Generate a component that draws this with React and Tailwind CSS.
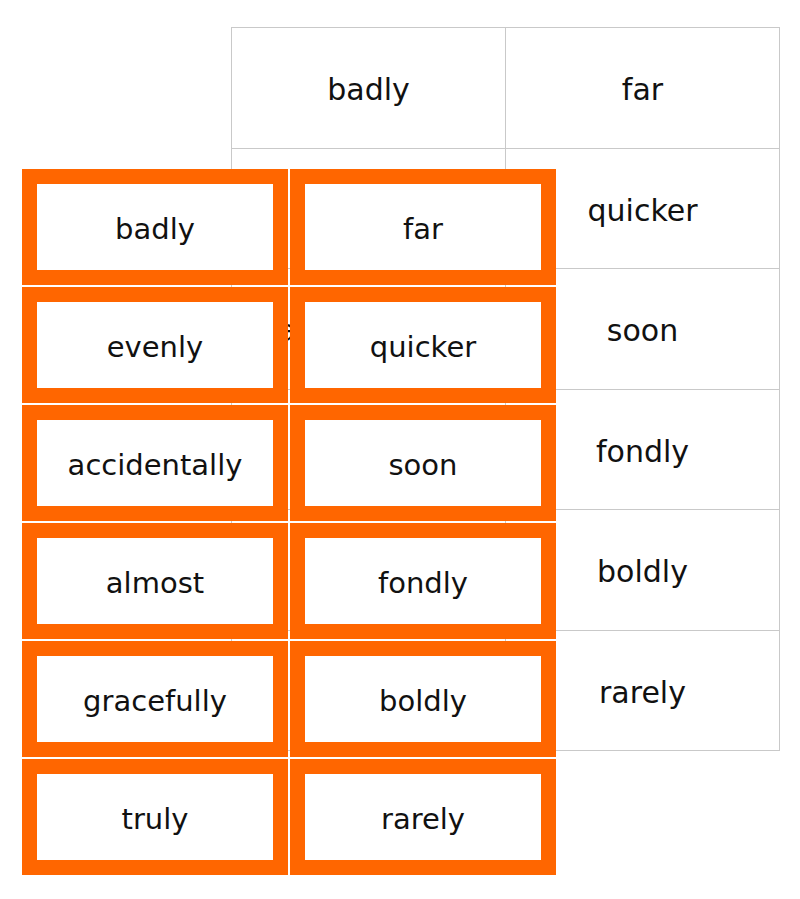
const back = ['badly', 'far', 'evenly', 'quicker', 'accidentally', 'soon', 'almost', 'fondly', 'gracefully', 'boldly', 'truly', 'rarely']
const front = ['badly', 'far', 'evenly', 'quicker', 'accidentally', 'soon', 'almost', 'fondly', 'gracefully', 'boldly', 'truly', 'rarely']

export default function App() {
  return (
    <div className="relative w-[800px] h-[899px] bg-white overflow-hidden" style={{ fontFamily: '"DejaVu Sans", sans-serif' }}>
      {/* back sheet */}
      <div className="ml-[231px] pt-[27px]">
        <div className="grid grid-cols-[274px_274px] grid-rows-6 h-[724px] w-[549px] border-l border-t border-[#c9c9c9]">
          {back.map((w, i) => (
            <div key={i} className="flex items-center justify-center pt-[4px] border-r border-b border-[#c9c9c9] text-[30px] text-[#111]">
              {w}
            </div>
          ))}
        </div>
      </div>

      {/* orange cards */}
      <div className="absolute left-[22px] top-[169px] grid grid-cols-[266px_266px] auto-rows-[116px] gap-[2px]">
        {front.map((w, i) => (
          <div key={i} className="flex items-center justify-center pt-[5px] bg-white border-[15px] border-[#ff6600] text-[29px] text-[#111]">
            {w}
          </div>
        ))}
      </div>
    </div>
  )
}
